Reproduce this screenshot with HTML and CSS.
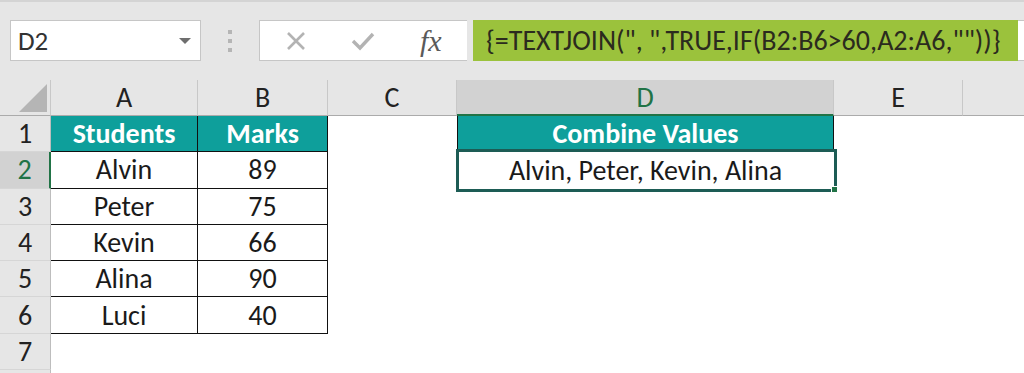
FILE: index.html
```html
<!DOCTYPE html>
<html lang="en">
<head>
    <meta charset="UTF-8">
    <meta name="viewport" content="width=device-width, initial-scale=1.0">
    <title>TEXTJOIN</title>
    <link rel="stylesheet" href="styles.css">
</head>
<body>
    <!-- Barre de formule -->
    <div class="toolbar">
        <div class="name-box">
            <span>D2</span>
            <span class="drop"></span>
        </div>
        <div class="grip"><i></i><i></i><i></i></div>
        <div class="fx-box">
            <svg class="ico" width="22" height="22" viewBox="0 0 22 22"><path d="M3 3 L19 19 M19 3 L3 19" stroke="#b3b3b3" stroke-width="2.6" fill="none"/></svg>
            <svg class="ico" width="24" height="20" viewBox="0 0 24 20"><path d="M2 10 L9 17 L22 3" stroke="#b3b3b3" stroke-width="3.4" fill="none"/></svg>
            <span class="fx">fx</span>
        </div>
        <div class="formula">{=TEXTJOIN(", ",TRUE,IF(B2:B6&gt;60,A2:A6,""))}</div>
        <div class="formula-end"></div>
    </div>

    <!-- Feuille -->
    <div class="sheet">
        <div class="ch corner"><span class="tri"></span></div>
        <div class="ch">A</div>
        <div class="ch">B</div>
        <div class="ch">C</div>
        <div class="ch active">D</div>
        <div class="ch">E</div>
        <div class="ch last"></div>

        <div class="rh">1</div>
        <div class="c th first">Students</div>
        <div class="c th">Marks</div>
        <div class="c"></div>
        <div class="c th solo">Combine Values</div>
        <div class="c"></div>
        <div class="c"></div>

        <div class="rh active">2</div>
        <div class="c td first">Alvin</div>
        <div class="c td">89</div>
        <div class="c"></div>
        <div class="c sel">Alvin, Peter, Kevin, Alina<span class="sel-box"><span class="handle"></span></span></div>
        <div class="c"></div>
        <div class="c"></div>

        <div class="rh">3</div>
        <div class="c td first">Peter</div>
        <div class="c td">75</div>
        <div class="c"></div><div class="c"></div><div class="c"></div><div class="c"></div>

        <div class="rh">4</div>
        <div class="c td first">Kevin</div>
        <div class="c td">66</div>
        <div class="c"></div><div class="c"></div><div class="c"></div><div class="c"></div>

        <div class="rh">5</div>
        <div class="c td first">Alina</div>
        <div class="c td">90</div>
        <div class="c"></div><div class="c"></div><div class="c"></div><div class="c"></div>

        <div class="rh">6</div>
        <div class="c td first">Luci</div>
        <div class="c td">40</div>
        <div class="c"></div><div class="c"></div><div class="c"></div><div class="c"></div>

        <div class="rh">7</div>
        <div class="c"></div><div class="c"></div><div class="c"></div><div class="c"></div><div class="c"></div><div class="c"></div>

        <div class="rh"></div>
        <div class="c"></div><div class="c"></div><div class="c"></div><div class="c"></div><div class="c"></div><div class="c"></div>
    </div>
</body>
</html>
```

FILE: styles.css
```css
body {
    margin: 0;
    padding: 0;
    width: 1024px;
    height: 373px;
    overflow: hidden;
    background: #fff;
    font-family: Carlito, Calibri, Lato, sans-serif;
    color: #1a1a1a;
}

/* Barre de formule */
.toolbar {
    height: 80px;
    box-sizing: border-box;
    border-top: 2px solid #d4d4d4;
    background: #e6e6e6;
    display: flex;
    align-items: flex-start;
    padding-top: 18px;
}

.name-box {
    margin-left: 10px;
    width: 191px;
    height: 41px;
    box-sizing: border-box;
    border: 1px solid #c6c6c6;
    background: #fff;
    display: flex;
    align-items: center;
    justify-content: space-between;
    padding: 0 9px 0 7px;
    font-size: 27px;
    color: #333;
}

.drop {
    width: 0;
    height: 0;
    border-left: 6px solid transparent;
    border-right: 6px solid transparent;
    border-top: 6px solid #6e6e6e;
}

.grip {
    width: 58px;
    height: 41px;
    display: flex;
    flex-direction: column;
    align-items: center;
    justify-content: center;
    gap: 5px;
}

.grip i {
    width: 4px;
    height: 4px;
    background: #b5b5b5;
}

.fx-box {
    width: 208px;
    height: 41px;
    box-sizing: border-box;
    border: 1px solid #c6c6c6;
    border-right: none;
    background: #fff;
    display: flex;
    align-items: center;
    padding-left: 25px;
    gap: 44px;
}

.fx {
    font-family: "Liberation Serif", serif;
    font-style: italic;
    font-size: 30px;
    color: #5a5a5a;
    margin-left: 1px;
}

.formula {
    margin-left: 6px;
    width: 545px;
    height: 41px;
    box-sizing: border-box;
    background: #9bc23c;
    font-size: 28px;
    line-height: 41px;
    padding-left: 13px;
    color: #2b2b1e;
    white-space: nowrap;
    overflow: hidden;
}

.formula-end {
    flex: 1;
    height: 41px;
    background: #fff;
    box-sizing: border-box;
    border-top: 1px solid #c6c6c6;
    border-bottom: 1px solid #c6c6c6;
}

/* Feuille */
.sheet {
    display: grid;
    grid-template-columns: 51px 147px 130px 129px 377px 129px 1fr;
    grid-template-rows: 36px repeat(8, 36.3px);
}

.ch {
    background: #e6e6e6;
    border-right: 1px solid #c8c8c8;
    border-bottom: 1px solid #ababab;
    box-sizing: border-box;
    display: flex;
    align-items: center;
    justify-content: center;
    font-size: 28px;
    color: #222;
}

.ch.corner {
    position: relative;
}

.tri {
    position: absolute;
    right: 3px;
    bottom: 3px;
    width: 0;
    height: 0;
    border-left: 28px solid transparent;
    border-bottom: 28px solid #b5b5b5;
}

.ch.active {
    background: #d2d2d2;
    border-bottom: 2px solid #217346;
    color: #217346;
}

.ch.last {
    border-right: none;
}

.rh {
    background: #e6e6e6;
    border-right: 1px solid #bdbdbd;
    border-bottom: 1px solid #d6d6d6;
    box-sizing: border-box;
    display: flex;
    align-items: center;
    justify-content: center;
    font-size: 28px;
    color: #222;
}

.rh.active {
    background: #d2d2d2;
    border-right: 2px solid #217346;
    color: #217346;
}

.c {
    box-sizing: border-box;
    display: flex;
    align-items: center;
    justify-content: center;
    font-size: 28px;
    white-space: nowrap;
}

.th {
    background: #0e9f9b;
    color: #fff;
    font-weight: bold;
    border-right: 1px solid #111;
    border-bottom: 1px solid #111;
}

.td {
    border-right: 1px solid #111;
    border-bottom: 1px solid #111;
}

.th.solo {
    border-left: 1px solid #111;
}

.sel {
    position: relative;
}

.sel-box {
    position: absolute;
    left: -1px;
    top: -3px;
    right: -3px;
    bottom: -3px;
    border: 3px solid #1d5c55;
}

.handle {
    position: absolute;
    right: -4px;
    bottom: -4px;
    width: 5px;
    height: 5px;
    background: #217346;
    border: 1px solid #fff;
}
```
